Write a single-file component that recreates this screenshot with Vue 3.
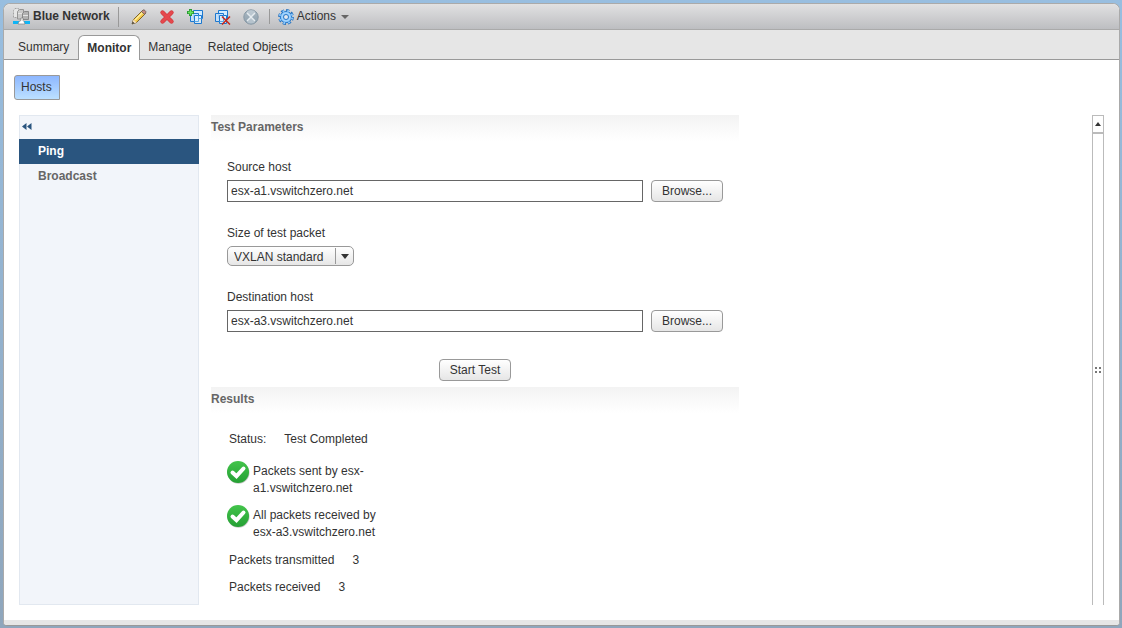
<script setup>
import { ref } from 'vue'

const tabs = ['Summary', 'Monitor', 'Manage', 'Related Objects']
const activeTab = ref('Monitor')
const tests = ['Ping', 'Broadcast']
const activeTest = ref('Ping')
const source = ref('esx-a1.vswitchzero.net')
const destination = ref('esx-a3.vswitchzero.net')
const size = ref('VXLAN standard')
const checks = ['Packets sent by esx-a1.vswitchzero.net', 'All packets received by esx-a3.vswitchzero.net']
const counts = [
  { label: 'Packets transmitted', value: 3 },
  { label: 'Packets received', value: 3 },
]
</script>

<template>
  <div class="desktop">
    <div class="window">
      <header class="toolbar">
        <svg class="object-icon" width="17" height="17" viewBox="0 0 17 17" aria-hidden="true">
          <path d="M.5 9.500V2.500L2 .5H5.500V9.500Z" fill="#e6e6e6" stroke="#a2a2a2" stroke-dasharray="2 1" />
          <path d="M4.500 11V3.500L6.500 1.500H10.500V11Z" fill="#c9c9c9" stroke="#949494" />
          <path d="M9.500 11.500V5.500L11.500 3.500H15.500V11.500Z" fill="#b2b2b2" stroke="#888" />
          <path d="M5 5.500H9M10 7.500H15" stroke="#e4e4e4" />
          <path d="M0 13H17V16H0Z" fill="#10b4f5" />
          <path d="M5 16L6 13.500L8 12.500V10H10V12.500L11 13.500L12 16Z" fill="#fff" stroke="#777" stroke-width=".6" />
        </svg>
        <h1>Blue Network</h1>
        <span class="divider"></span>
        <button class="tool" aria-label="Edit">
          <svg width="16" height="16" viewBox="0 0 16 16">
            <path d="M1 15L2.500 10.500L11.500 1.500L14.500 4.500L5.500 13.500Z" fill="#f3c84a" stroke="#76581d" stroke-width=".9" />
            <path d="M4 11L12 3" stroke="#fff0a0" stroke-width="1.400" />
            <path d="M2.500 10.500L5.500 13.500L1 15Z" fill="#f4dfbd" />
            <path d="M1 15L1.700 12.500L3.500 14.300Z" fill="#333" />
            <path d="M10.500 2.500L12 1Q13 .5 14 1.500L14.700 2.300Q15.400 3 14.500 4L13.500 5.500Z" fill="#c98b80" stroke="#665c57" stroke-width=".8" />
          </svg>
        </button>
        <button class="tool" aria-label="Delete">
          <svg width="16" height="16" viewBox="0 0 16 16">
            <path d="M3.500 3.500L12.500 12.500M12.500 3.500L3.500 12.500" stroke="#d23c40" stroke-width="4.400" stroke-linecap="round" />
            <path d="M3.500 3.500L12.500 12.500M12.500 3.500L3.500 12.500" stroke="#e5484d" stroke-width="3" stroke-linecap="round" />
          </svg>
        </button>
        <button class="tool" aria-label="Add virtual machine">
          <svg width="16" height="16" viewBox="0 0 16 16">
            <path d="M6.500 1.500H15.500V9.500H6.500Z" fill="#d2ebff" stroke="#1c78d0" />
            <path d="M3.500 4.500H11.500V12.500H3.500Z" fill="#c5e4ff" fill-opacity=".8" stroke="#1c78d0" />
            <path d="M7.500 6.500H14.500V14.500H7.500Z" fill="#e2f3ff" fill-opacity=".75" stroke="#1c78d0" />
            <path d="M7.500 12.500H11.500V6.500M11.500 9.500H14.500" fill="none" stroke="#5ba8e8" />
            <path d="M3.500 0V7M0 3.500H7" stroke="#2a9a35" stroke-width="3" />
            <path d="M3.500 1V6M1 3.500H6" stroke="#6ae35c" stroke-width="1.400" />
          </svg>
        </button>
        <button class="tool" aria-label="Remove virtual machine">
          <svg width="16" height="16" viewBox="0 0 16 16">
            <path d="M3.500 1.500H12.500V9.500H3.500Z" fill="#d2ebff" stroke="#1c78d0" />
            <path d="M.5 4.500H8.500V12.500H.5Z" fill="#c5e4ff" fill-opacity=".8" stroke="#1c78d0" />
            <path d="M4.500 6.500H11.500V14.500H4.500Z" fill="#e2f3ff" fill-opacity=".75" stroke="#1c78d0" />
            <path d="M4.500 12.500H8.500V6.500" fill="none" stroke="#5ba8e8" />
            <path d="M7 7.500L15 15.500M15 7.500L7 15.500" stroke="#c8261a" stroke-width="1.500" />
          </svg>
        </button>
        <button class="tool" aria-label="Disconnect">
          <svg width="16" height="16" viewBox="0 0 16 16">
            <defs>
              <linearGradient id="orb" x2="0" y2="1"><stop stop-color="#a9b7c1" /><stop offset="1" stop-color="#8fa1ae" /></linearGradient>
            </defs>
            <circle cx="8" cy="8" r="7.200" fill="url(#orb)" stroke="#8798a5" />
            <path d="M3.300 3Q8 -1 12.700 3L8 7.500ZM3.800 13Q8 16 12.200 13L8 8.500Z" fill="#c5d0d8" fill-opacity=".7" />
            <path d="M4 4L12 12M12 4L4 12" stroke="#e6ecf0" stroke-width="1.500" />
          </svg>
        </button>
        <span class="divider short"></span>
        <button class="actions">
          <svg width="16" height="16" viewBox="0 0 16 16" aria-hidden="true">
            <circle cx="8" cy="8" r="6.700" fill="none" stroke="#2470bd" stroke-width="2.400" stroke-dasharray="3.200 2.060" />
            <circle cx="8" cy="8" r="5.700" fill="#8ac6fa" stroke="#2878c8" />
            <circle cx="8" cy="8" r="6.300" fill="none" stroke="#8ac6fa" stroke-width="2" stroke-dasharray="1.800 3.148" stroke-dashoffset="-.6" />
            <circle cx="8" cy="8" r="4" fill="none" stroke="#a8d7ff" />
            <circle cx="8" cy="8" r="2.500" fill="#e4e8ee" stroke="#2878c8" />
          </svg>
          <span>Actions</span>
          <svg width="8" height="4" viewBox="0 0 8 4" aria-hidden="true"><path d="M0 0H8L4 4Z" fill="#666" /></svg>
        </button>
      </header>

      <nav class="tabs" aria-label="Object views">
        <button v-for="tab in tabs" :key="tab" :class="{ active: tab === activeTab }" @click="activeTab = tab">{{ tab }}</button>
      </nav>

      <main class="content">
        <button class="hosts">Hosts</button>
        <div class="workspace">
          <aside class="sidebar">
            <button class="collapse" aria-label="Collapse list">
              <svg width="10" height="7" viewBox="0 0 10 7"><path d="M4.500 0V7L0 3.500ZM9.500 0V7L5 3.500Z" fill="#2a557f" /></svg>
            </button>
            <button v-for="test in tests" :key="test" class="entry" :class="{ active: test === activeTest }" @click="activeTest = test">{{ test }}</button>
          </aside>

          <div class="detail">
            <section>
              <h2>Test Parameters</h2>
              <form class="form" @submit.prevent>
                <div class="field">
                  <label for="source">Source host</label>
                  <div class="picker">
                    <input id="source" v-model="source" type="text" />
                    <button type="button" class="push">Browse...</button>
                  </div>
                </div>
                <div class="field">
                  <label for="size">Size of test packet</label>
                  <div class="dropdown">
                    <select id="size" v-model="size"><option>VXLAN standard</option></select>
                    <span class="arrow"><svg width="8" height="5" viewBox="0 0 8 5" aria-hidden="true"><path d="M0 0H8L4 5Z" fill="#333" /></svg></span>
                  </div>
                </div>
                <div class="field">
                  <label for="destination">Destination host</label>
                  <div class="picker">
                    <input id="destination" v-model="destination" type="text" />
                    <button type="button" class="push">Browse...</button>
                  </div>
                </div>
                <button class="push start">Start Test</button>
              </form>
            </section>
            <section>
              <h2>Results</h2>
              <div class="results">
                <p class="row status"><span>Status:</span><span>Test Completed</span></p>
                <div class="checks">
                  <div v-for="check in checks" :key="check" class="check">
                    <svg width="24" height="24" viewBox="0 0 24 24" aria-hidden="true">
                      <defs><linearGradient id="ok" x2="0" y2="1"><stop stop-color="#43c44b" /><stop offset="1" stop-color="#25a034" /></linearGradient></defs>
                      <circle cx="12.500" cy="12.700" r="11" fill="#000" fill-opacity=".22" />
                      <circle cx="12" cy="12" r="11" fill="url(#ok)" />
                      <path d="M6.500 12.500L10.500 16.200L17.500 8.500" fill="none" stroke="#fff" stroke-width="4" stroke-linecap="round" />
                    </svg>
                    <p>{{ check }}</p>
                  </div>
                </div>
                <p v-for="count in counts" :key="count.label" class="row count"><span>{{ count.label }}</span><span>{{ count.value }}</span></p>
              </div>
            </section>
          </div>

          <div class="rail">
            <button aria-label="Scroll up"><svg width="6" height="4" viewBox="0 0 6 4"><path d="M0 4L3 0L6 4Z" fill="#333" /></svg></button>
            <svg class="grip" width="6" height="6" viewBox="0 0 6 6" aria-hidden="true"><path d="M0 0H2V2H0ZM4 0H6V2H4ZM0 4H2V6H0ZM4 4H6V6H4Z" fill="#777" /></svg>
          </div>
        </div>
      </main>
    </div>
  </div>
</template>

<style>
body { margin: 0; }
</style>

<style scoped>
* { box-sizing: border-box; }
.desktop {
  min-height: 100vh;
  padding: 3px 2px 2px 3px;
  display: flex;
  background: linear-gradient(#98bee0, #8fa6bc);
  color: #333;
  font: 12px/17px "Liberation Sans", Arial, sans-serif;
}
button, input, select { font: inherit; color: inherit; margin: 0; }
button { padding: 0; border: 0; background: none; }
svg { display: block; flex: none; }
h1, h2, p { margin: 0; font-size: 12px; }
.window {
  flex: 1;
  display: flex;
  flex-direction: column;
  border: 1px solid #aaa;
  border-radius: 7px 7px 4px 4px;
  overflow: hidden;
  background: #fff;
  border-bottom-color: #999;
}
.toolbar {
  height: 26px;
  display: flex;
  align-items: center;
  padding-left: 9px;
  border-bottom: 1px solid #aaa;
  background: linear-gradient(#e1e1e2, #bdbec1);
}
.toolbar h1 { margin-left: 3px; }
.divider { width: 1px; height: 20px; margin: 0 12px 0 8px; background: #999; }
.divider.short { height: 15px; margin: 0 8px 0 -2px; }
.tool { margin-right: 12px; }
.actions { display: flex; align-items: center; gap: 3px; }
.actions span { margin-right: 2px; }
.tabs {
  height: 30px;
  display: flex;
  align-items: flex-end;
  padding-left: 6px;
  border-bottom: 1px solid #999;
  background: #e6e6e6;
}
.tabs button { height: 23px; padding: 0 8px; }
.tabs button.active {
  height: 25px;
  margin: 0 0 -1px 1px;
  padding: 0 8px;
  border: 1px solid #999;
  border-bottom: 0;
  border-radius: 6px 6px 0 0;
  background: #fff;
  font-weight: bold;
}
.content {
  flex: 1;
  display: flex;
  flex-direction: column;
  padding: 15px 15px 15px 10px;
  border-bottom: 5px solid #e6e6e6;
}
.hosts {
  align-self: flex-start;
  height: 25px;
  padding: 0 7px 0 6px;
  border: 1px solid #999;
  border-radius: 3px 0 0 3px;
  background: linear-gradient(#8db7ff, #bce0ff);
}
.workspace { flex: 1; display: flex; margin: 15px 0 0 5px; }
.sidebar {
  width: 180px;
  display: flex;
  flex-direction: column;
  border: 1px solid #e2e8f0;
  background: #f2f5fa;
}
.collapse { height: 23px; padding: 0 0 2px 2px; }
.entry { height: 25px; margin: 0 -1px; padding-left: 19px; text-align: left; font-weight: bold; color: #666; }
.entry.active { background: #2a557f; color: #fff; }
.detail { flex: 0 1 528px; margin-left: 12px; }
h2 { height: 26px; line-height: 24px; color: #666; background: linear-gradient(#f3f3f3, #fff); }
.form { display: flex; flex-direction: column; gap: 23px; padding: 18px 16px 6px; }
.field label { display: block; height: 21px; }
.picker { display: flex; gap: 8px; }
.picker input { flex: 1; min-width: 0; height: 22px; padding: 0 3px; border: 1px solid #666; background: #fff; }
.push {
  height: 22px;
  padding: 0 10px;
  border: 1px solid #999;
  border-radius: 4px;
  background: linear-gradient(#fff, #e6e6e6);
}
.start { align-self: center; margin-top: 4px; }
.dropdown { position: relative; width: 127px; height: 20px; }
.dropdown select {
  width: 100%;
  height: 20px;
  padding: 2px 6px 0;
  appearance: none;
  border: 1px solid #999;
  border-radius: 5px;
  background: linear-gradient(#fff, #e6e6e6);
}
.arrow {
  position: absolute;
  top: 2px;
  right: 1px;
  width: 18px;
  height: 16px;
  display: grid;
  place-items: center;
  border-left: 1px solid #999;
  pointer-events: none;
}
.results { display: flex; flex-direction: column; gap: 10px; padding: 18px 16px 8px; }
.row { display: flex; gap: 18px; padding-left: 2px; }
.status { padding-bottom: 5px; }
.checks { display: flex; flex-direction: column; gap: 10px; padding-bottom: 1px; }
.check { display: flex; gap: 3px; width: 156px; }
.check svg { margin-left: -1px; margin-top: -3px; }
.rail {
  width: 12px;
  margin-left: auto;
  display: flex;
  flex-direction: column;
  align-items: center;
  border: solid #bbb;
  border-width: 1px 1px 0;
}
.rail button { width: 100%; height: 18px; display: grid; place-items: center; border-bottom: 2px solid #bbb; }
.grip { margin: auto; }
</style>
